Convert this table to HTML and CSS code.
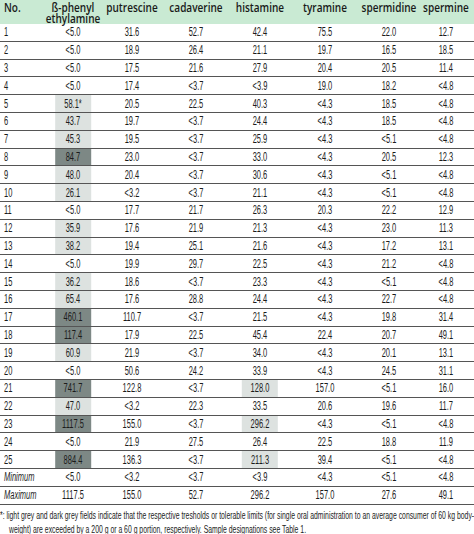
FILE: index.html
```html
<!DOCTYPE html>
<html>
<head>
<meta charset="utf-8">
<link rel="stylesheet" href="styles.css">
</head>
<body>
<div class="tbl">
  <div class="row head">
    <div class="c first">No.</div>
    <div class="c">ß-phenyl<br>ethylamine</div>
    <div class="c">putrescine</div>
    <div class="c">cadaverine</div>
    <div class="c">histamine</div>
    <div class="c">tyramine</div>
    <div class="c">spermidine</div>
    <div class="c">spermine</div>
  </div>
  <div class="row"><div class="c first">1</div><div class="c">&lt;5.0</div><div class="c">31.6</div><div class="c">52.7</div><div class="c">42.4</div><div class="c">75.5</div><div class="c">22.0</div><div class="c">12.7</div></div>
  <div class="row"><div class="c first">2</div><div class="c">&lt;5.0</div><div class="c">18.9</div><div class="c">26.4</div><div class="c">21.1</div><div class="c">19.7</div><div class="c">16.5</div><div class="c">18.5</div></div>
  <div class="row"><div class="c first">3</div><div class="c">&lt;5.0</div><div class="c">17.5</div><div class="c">21.6</div><div class="c">27.9</div><div class="c">20.4</div><div class="c">20.5</div><div class="c">11.4</div></div>
  <div class="row"><div class="c first">4</div><div class="c">&lt;5.0</div><div class="c">17.4</div><div class="c">&lt;3.7</div><div class="c">&lt;3.9</div><div class="c">19.0</div><div class="c">18.2</div><div class="c">&lt;4.8</div></div>
  <div class="row"><div class="c first">5</div><div class="c"><span class="hl light">58.1*</span></div><div class="c">20.5</div><div class="c">22.5</div><div class="c">40.3</div><div class="c">&lt;4.3</div><div class="c">18.5</div><div class="c">&lt;4.8</div></div>
  <div class="row"><div class="c first">6</div><div class="c"><span class="hl light">43.7</span></div><div class="c">19.7</div><div class="c">&lt;3.7</div><div class="c">24.4</div><div class="c">&lt;4.3</div><div class="c">18.5</div><div class="c">&lt;4.8</div></div>
  <div class="row"><div class="c first">7</div><div class="c"><span class="hl light">45.3</span></div><div class="c">19.5</div><div class="c">&lt;3.7</div><div class="c">25.9</div><div class="c">&lt;4.3</div><div class="c">&lt;5.1</div><div class="c">&lt;4.8</div></div>
  <div class="row"><div class="c first">8</div><div class="c"><span class="hl dark">84.7</span></div><div class="c">23.0</div><div class="c">&lt;3.7</div><div class="c">33.0</div><div class="c">&lt;4.3</div><div class="c">20.5</div><div class="c">12.3</div></div>
  <div class="row"><div class="c first">9</div><div class="c"><span class="hl light">48.0</span></div><div class="c">20.4</div><div class="c">&lt;3.7</div><div class="c">30.6</div><div class="c">&lt;4.3</div><div class="c">&lt;5.1</div><div class="c">&lt;4.8</div></div>
  <div class="row"><div class="c first">10</div><div class="c"><span class="hl light">26.1</span></div><div class="c">&lt;3.2</div><div class="c">&lt;3.7</div><div class="c">21.1</div><div class="c">&lt;4.3</div><div class="c">&lt;5.1</div><div class="c">&lt;4.8</div></div>
  <div class="row"><div class="c first">11</div><div class="c">&lt;5.0</div><div class="c">17.7</div><div class="c">21.7</div><div class="c">26.3</div><div class="c">20.3</div><div class="c">22.2</div><div class="c">12.9</div></div>
  <div class="row"><div class="c first">12</div><div class="c"><span class="hl light">35.9</span></div><div class="c">17.6</div><div class="c">21.9</div><div class="c">21.3</div><div class="c">&lt;4.3</div><div class="c">23.0</div><div class="c">11.3</div></div>
  <div class="row"><div class="c first">13</div><div class="c"><span class="hl light">38.2</span></div><div class="c">19.4</div><div class="c">25.1</div><div class="c">21.6</div><div class="c">&lt;4.3</div><div class="c">17.2</div><div class="c">13.1</div></div>
  <div class="row"><div class="c first">14</div><div class="c">&lt;5.0</div><div class="c">19.9</div><div class="c">29.7</div><div class="c">22.5</div><div class="c">&lt;4.3</div><div class="c">21.2</div><div class="c">&lt;4.8</div></div>
  <div class="row"><div class="c first">15</div><div class="c"><span class="hl light">36.2</span></div><div class="c">18.6</div><div class="c">&lt;3.7</div><div class="c">23.3</div><div class="c">&lt;4.3</div><div class="c">&lt;5.1</div><div class="c">&lt;4.8</div></div>
  <div class="row"><div class="c first">16</div><div class="c"><span class="hl light">65.4</span></div><div class="c">17.6</div><div class="c">28.8</div><div class="c">24.4</div><div class="c">&lt;4.3</div><div class="c">22.7</div><div class="c">&lt;4.8</div></div>
  <div class="row"><div class="c first">17</div><div class="c"><span class="hl dark">460.1</span></div><div class="c">110.7</div><div class="c">&lt;3.7</div><div class="c">21.5</div><div class="c">&lt;4.3</div><div class="c">19.8</div><div class="c">31.4</div></div>
  <div class="row"><div class="c first">18</div><div class="c"><span class="hl dark">117.4</span></div><div class="c">17.9</div><div class="c">22.5</div><div class="c">45.4</div><div class="c">22.4</div><div class="c">20.7</div><div class="c">49.1</div></div>
  <div class="row"><div class="c first">19</div><div class="c"><span class="hl light">60.9</span></div><div class="c">21.9</div><div class="c">&lt;3.7</div><div class="c">34.0</div><div class="c">&lt;4.3</div><div class="c">20.1</div><div class="c">13.1</div></div>
  <div class="row"><div class="c first">20</div><div class="c">&lt;5.0</div><div class="c">50.6</div><div class="c">24.2</div><div class="c">33.9</div><div class="c">&lt;4.3</div><div class="c">24.5</div><div class="c">31.1</div></div>
  <div class="row"><div class="c first">21</div><div class="c"><span class="hl dark">741.7</span></div><div class="c">122.8</div><div class="c">&lt;3.7</div><div class="c"><span class="hl light">128.0</span></div><div class="c">157.0</div><div class="c">&lt;5.1</div><div class="c">16.0</div></div>
  <div class="row"><div class="c first">22</div><div class="c"><span class="hl light">47.0</span></div><div class="c">&lt;3.2</div><div class="c">22.3</div><div class="c">33.5</div><div class="c">20.6</div><div class="c">19.6</div><div class="c">11.7</div></div>
  <div class="row"><div class="c first">23</div><div class="c"><span class="hl dark">1117.5</span></div><div class="c">155.0</div><div class="c">&lt;3.7</div><div class="c"><span class="hl light">296.2</span></div><div class="c">&lt;4.3</div><div class="c">&lt;5.1</div><div class="c">&lt;4.8</div></div>
  <div class="row"><div class="c first">24</div><div class="c">&lt;5.0</div><div class="c">21.9</div><div class="c">27.5</div><div class="c">26.4</div><div class="c">22.5</div><div class="c">18.8</div><div class="c">11.9</div></div>
  <div class="row"><div class="c first">25</div><div class="c"><span class="hl dark">884.4</span></div><div class="c">136.3</div><div class="c">&lt;3.7</div><div class="c"><span class="hl light">211.3</span></div><div class="c">39.4</div><div class="c">&lt;5.1</div><div class="c">&lt;4.8</div></div>
  <div class="row"><div class="c first it">Minimum</div><div class="c">&lt;5.0</div><div class="c">&lt;3.2</div><div class="c">&lt;3.7</div><div class="c">&lt;3.9</div><div class="c">&lt;4.3</div><div class="c">&lt;5.1</div><div class="c">&lt;4.8</div></div>
  <div class="row"><div class="c first it">Maximum</div><div class="c">1117.5</div><div class="c">155.0</div><div class="c">52.7</div><div class="c">296.2</div><div class="c">157.0</div><div class="c">27.6</div><div class="c">49.1</div></div>
</div>
<div class="note">
  <div class="nl">*: light grey and dark grey fields indicate that the respective tresholds or tolerable limits (for single oral administration to an average consumer of 60 kg body-</div>
  <div class="nl ind">weight) are exceeded by a 200 g or a 60 g portion, respectively. Sample designations see Table 1.</div>
</div>
</body>
</html>
```

FILE: styles.css
```css
html, body {
  margin: 0;
  padding: 0;
  background: #ffffff;
}
body {
  width: 474px;
  font-family: "Liberation Sans", Arial, sans-serif;
  color: #1c1c1c;
}
.tbl {
  display: flex;
  flex-direction: column;
}
.row {
  --s: 0.6;
  display: grid;
  width: calc(474px / var(--s));
  grid-template-columns:
    calc(44px / var(--s)) calc(58px / var(--s)) calc(60px / var(--s)) calc(68px / var(--s))
    calc(60px / var(--s)) calc(70px / var(--s)) calc(58px / var(--s)) calc(56px / var(--s));
  height: 17.8px;
  box-sizing: border-box;
  border-bottom: 1.5px solid #555;
  font-size: 12.5px;
  transform: scaleX(var(--s));
  transform-origin: 0 0;
}
.row .c {
  display: flex;
  align-items: center;
  justify-content: center;
  height: 100%;
  white-space: nowrap;
}
.row .c.first {
  justify-content: flex-start;
  padding-left: calc(4px / var(--s));
}
.row .c.it {
  font-style: italic;
}
.head {
  --s: 0.85;
  height: 24px;
  border-bottom: none;
  background: #c9ead3;
  font-family: "Open Sans", "Liberation Sans", sans-serif;
  font-weight: 600;
  font-size: 11.8px;
  line-height: 11.5px;
  color: #1a1a1a;
}
.head .c {
  align-items: flex-start;
  text-align: center;
  padding-top: 1.5px;
  box-sizing: border-box;
}
.hl {
  display: flex;
  align-items: center;
  justify-content: center;
  width: calc(36px / var(--s));
  height: 100%;
}
.hl.light {
  background: #dde2e0;
}
.hl.dark {
  background: #7d8885;
}
.note {
  margin-top: 3px;
  font-size: 10.5px;
  line-height: 14px;
  color: #1c1c1c;
}
.nl {
  --s: 0.653;
  width: calc(474px / var(--s));
  white-space: nowrap;
  transform: scaleX(var(--s));
  transform-origin: 0 0;
}
.nl.ind {
  padding-left: calc(9px / var(--s));
}
```
